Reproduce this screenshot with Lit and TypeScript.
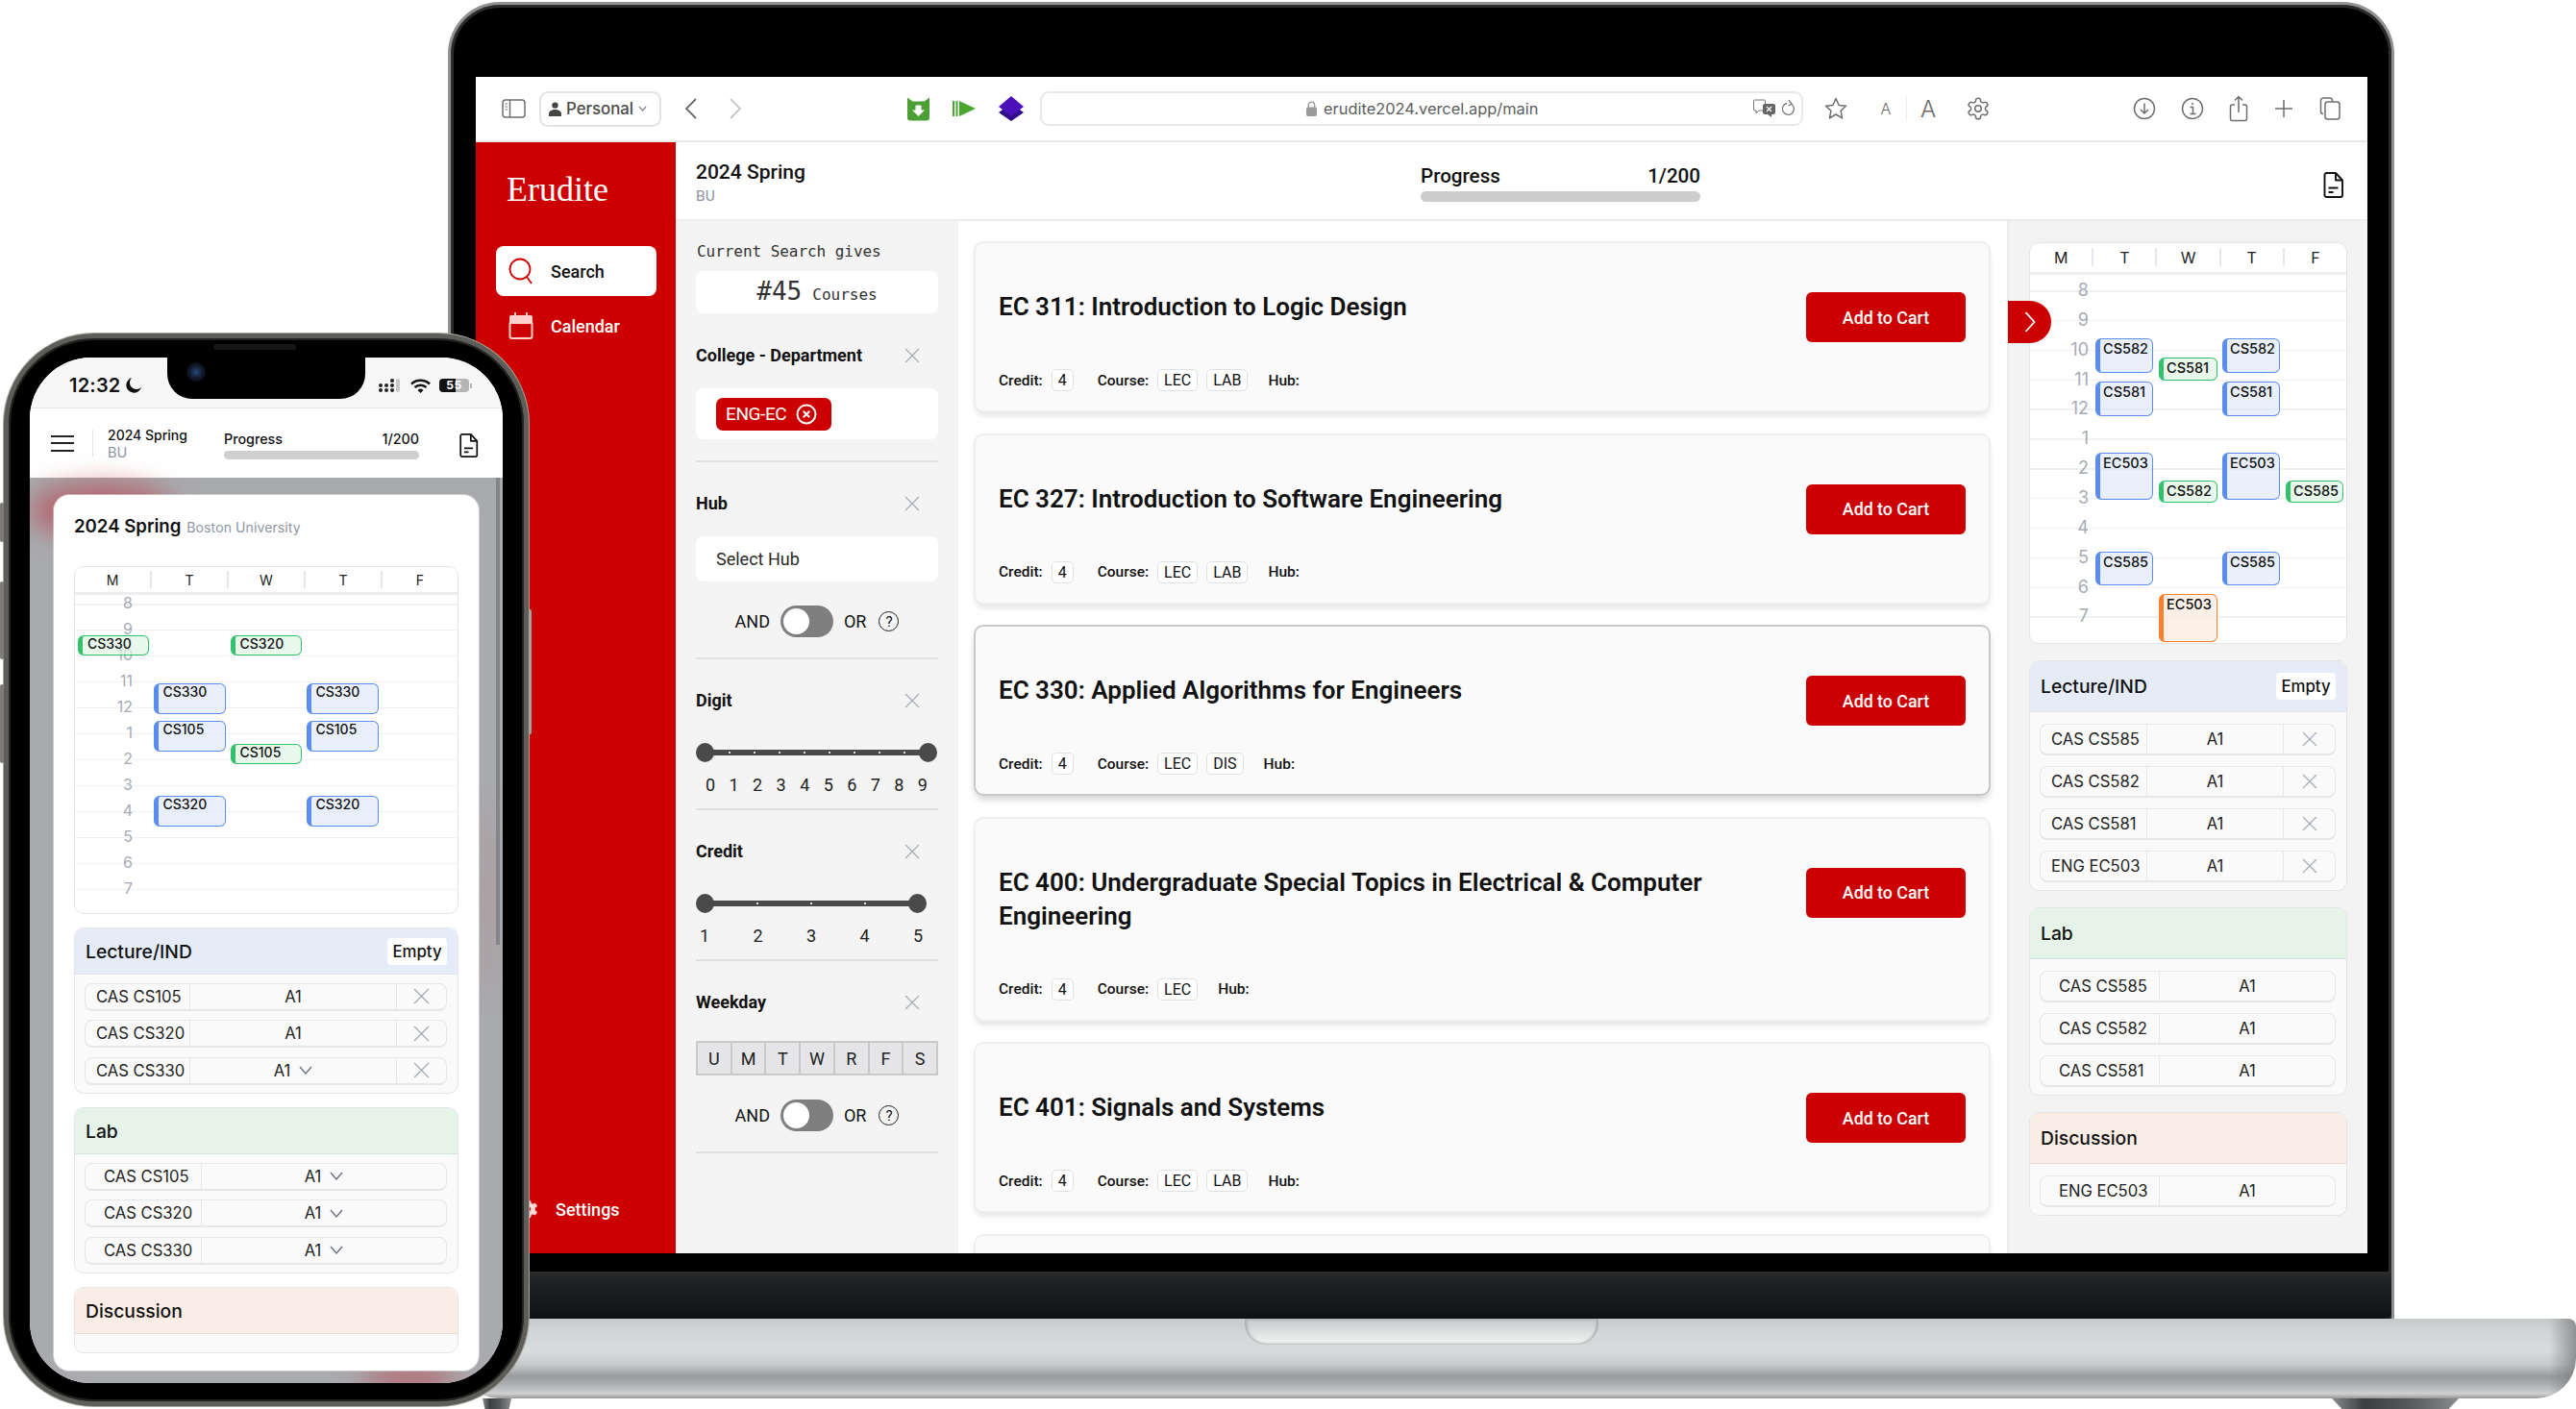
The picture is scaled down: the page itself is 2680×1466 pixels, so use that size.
import { LitElement, html, css, nothing } from "lit";
import { customElement } from "lit/decorators.js";

type Ev = { t: string; k: "b" | "g" | "o"; x: number; y: number; w: number; h: number };
type CalCfg = { cls: string; first: number; pitch: number; right: number; labelH: number; lines: number; events: Ev[] };

const HOURS = ["8", "9", "10", "11", "12", "1", "2", "3", "4", "5", "6", "7"];
const DAYS = ["M", "T", "W", "T", "F"];

const lapCal: CalCfg = {
  cls: "cal-lap", first: 16, pitch: 30.85, right: 61, labelH: 24, lines: 12,
  events: [
    { t: "CS582", k: "b", x: 68, y: 66, w: 60, h: 36 }, { t: "CS582", k: "b", x: 200, y: 66, w: 60, h: 36 },
    { t: "CS581", k: "g", x: 134, y: 86, w: 61, h: 24 },
    { t: "CS581", k: "b", x: 68, y: 111, w: 60, h: 36 }, { t: "CS581", k: "b", x: 200, y: 111, w: 60, h: 36 },
    { t: "EC503", k: "b", x: 68, y: 185, w: 60, h: 49 }, { t: "EC503", k: "b", x: 200, y: 185, w: 60, h: 49 },
    { t: "CS582", k: "g", x: 134, y: 214, w: 61, h: 23 }, { t: "CS585", k: "g", x: 266, y: 214, w: 60, h: 23 },
    { t: "CS585", k: "b", x: 68, y: 288, w: 60, h: 35 }, { t: "CS585", k: "b", x: 200, y: 288, w: 60, h: 35 },
    { t: "EC503", k: "o", x: 134, y: 332, w: 61, h: 50 },
  ],
};
const phoneCal: CalCfg = {
  cls: "cal-phone", first: 9, pitch: 26.97, right: 60, labelH: 22, lines: 12,
  events: [
    { t: "CS330", k: "g", x: 3, y: 42, w: 74, h: 21 }, { t: "CS320", k: "g", x: 161.5, y: 42, w: 74, h: 21 },
    { t: "CS330", k: "b", x: 81.5, y: 91.6, w: 75, h: 32 }, { t: "CS330", k: "b", x: 240.5, y: 91.6, w: 75, h: 32 },
    { t: "CS105", k: "b", x: 81.5, y: 131, w: 75, h: 32 }, { t: "CS105", k: "b", x: 240.5, y: 131, w: 75, h: 32 },
    { t: "CS105", k: "g", x: 161.5, y: 154.6, w: 74, h: 21 },
    { t: "CS320", k: "b", x: 81.5, y: 209, w: 75, h: 32 }, { t: "CS320", k: "b", x: 240.5, y: 209, w: 75, h: 32 },
  ],
};

const xIcon = (cls = "x-ico") => html`<svg class=${cls} viewBox="0 0 16 16" fill="none" stroke="#a5abb6" stroke-width="1.2"><path d="M1 1l14 14M15 1L1 15"/></svg>`;
const chev = html`<svg class="chev" viewBox="0 0 14 9" fill="none" stroke="#6b7280" stroke-width="1.4"><path d="M1 1l6 7 6-7"/></svg>`;
const docIcon = (cls: string) => html`<svg class=${cls} viewBox="0 0 21 27" fill="none" stroke="#111" stroke-width="1.9" stroke-linejoin="round"><path d="M3.5 1h9.5l7 7.5V24a2 2 0 0 1-2 2H3.5a2 2 0 0 1-2-2V3a2 2 0 0 1 2-2z"/><path d="M13 1v7.5h7M5.5 16.5h10M5.5 21h5"/></svg>`;
const gearPath = "M12.22 2h-.44a2 2 0 0 0-2 2v.18a2 2 0 0 1-1 1.73l-.43.25a2 2 0 0 1-2 0l-.15-.08a2 2 0 0 0-2.73.73l-.22.38a2 2 0 0 0 .73 2.73l.15.1a2 2 0 0 1 1 1.72v.51a2 2 0 0 1-1 1.74l-.15.09a2 2 0 0 0-.73 2.73l.22.38a2 2 0 0 0 2.73.73l.15-.08a2 2 0 0 1 2 0l.43.25a2 2 0 0 1 1 1.73V20a2 2 0 0 0 2 2h.44a2 2 0 0 0 2-2v-.18a2 2 0 0 1 1-1.73l.43-.25a2 2 0 0 1 2 0l.15.08a2 2 0 0 0 2.73-.73l.22-.39a2 2 0 0 0-.73-2.73l-.15-.08a2 2 0 0 1-1-1.74v-.5a2 2 0 0 1 1-1.74l.15-.09a2 2 0 0 0 .73-2.73l-.22-.38a2 2 0 0 0-2.73-.73l-.15.08a2 2 0 0 1-2 0l-.43-.25a2 2 0 0 1-1-1.73V4a2 2 0 0 0-2-2z";

@customElement("app-root")
export class AppRoot extends LitElement {
  static styles = css`
    :host { display: block; position: relative; width: 2680px; height: 1466px; overflow: hidden; background: #fff; font-family: Roboto, "Liberation Sans", sans-serif; color: #111; }
    * { box-sizing: border-box; }
    svg { display: block; flex: none; }

    /* laptop */
    .base { position: absolute; left: 478px; top: 1372px; width: 2202px; height: 83px; border-radius: 0 8px 42px 42px;
      background: linear-gradient(to left, rgba(120,122,124,.75), rgba(120,122,124,0) 28px), linear-gradient(180deg, #c6c9ca 0, #d2d5d6 14px, #d9dcdc 34px, #c6c9ca 48px, #989a9b 60px, #abadae 68px, #cfd0d1 78px, #979797 83px); }
    .notch { position: absolute; left: 817px; top: 0; width: 368px; height: 27px; border-radius: 0 0 22px 22px;
      background: linear-gradient(180deg, #c3c6c7, #eef0f0 85%); box-shadow: inset 2px 0 3px #a8aaab, inset -2px 0 3px #a8aaab; }
    .foot { position: absolute; top: 1455px; height: 11px; background: linear-gradient(90deg, #8a8c8d, #3d3e40 25%, #55575a 60%, #8a8c8d); }
    .foot-r { left: 2426px; width: 132px; clip-path: polygon(0 0, 100% 0, 92% 100%, 8% 100%); }
    .foot-l { left: 502px; width: 30px; clip-path: polygon(0 0, 100% 0, 92% 100%, 8% 100%); }
    .laptop { position: absolute; left: 466px; top: 2px; width: 2025px; height: 1370px; background: #000; border-radius: 54px 54px 0 0; border: 3px solid #8f9193; border-bottom: 0; box-shadow: inset 0 0 0 3px #2c2c2c; padding: 75px 25px 0 26px; display: flex; flex-direction: column; }
    .screen { width: 1968px; height: 1224px; flex: none; background: #fff; display: flex; flex-direction: column; overflow: hidden; }
    .hinge { flex: 1; margin: 19px -25px 0 -26px; background: linear-gradient(180deg, #27282a, #1e1f21 30%, #101113); border-top: 2px solid #2d2e30; border-radius: 0 0 6px 6px; }

    /* browser toolbar */
    .toolbar { height: 68px; flex: none; display: flex; align-items: center; padding-left: 27px; border-bottom: 2px solid #e8e8e8; }
    .ml14 { margin-left: 14px; } .ml17 { margin-left: 17px; } .ml22 { margin-left: 22px; } .ml24 { margin-left: 24px; }
    .ml28 { margin-left: 28px; } .ml26 { margin-left: 26px; } .ml31 { margin-left: 31px; } .ml32 { margin-left: 32px; } .ml34 { margin-left: 34px; }
    .ml148 { margin-left: 148px; } .ml172 { margin-left: 172px; }
    .personal { width: 127px; height: 37px; border: 2px solid #e3e3e3; border-radius: 9px; display: flex; align-items: center; gap: 5px; padding-left: 8px; font: 500 16.8px Inter, sans-serif; color: #4b4b4b; }
    .address { width: 794px; height: 36px; border: 2px solid #e8e8e8; border-radius: 9px; display: flex; align-items: center; position: relative; padding-left: 275px; gap: 7px; font: 400 16.4px Inter, sans-serif; color: #5d5d5d; }
    .address-tools { margin-left: auto; display: flex; align-items: center; gap: 6px; padding-right: 6px; }
    .tb-a { font: 300 16px Inter, sans-serif; color: #6a6a6a; width: 12px; text-align: center; }
    .tb-A { font: 300 24px Inter, sans-serif; color: #6a6a6a; width: 16px; display: flex; justify-content: center; position: relative; }
    .tb-sep { width: 1px; height: 26px; background: #eee; margin: 0 14px 0 15px; }

    /* app */
    .app { flex: 1; display: flex; min-height: 0; }
    .side { width: 208px; flex: none; background: #cc0000; display: flex; flex-direction: column; padding: 29px 0 33px 21px; }
    .brand { font: 400 36px/40px "Liberation Serif", serif; color: #fff; padding-left: 11px; }
    .nav { width: 167px; height: 52px; display: flex; align-items: center; gap: 18px; padding-left: 13px; border-radius: 8px; font: 500 18px Roboto, sans-serif; color: #fff; }
    .nav-on { background: #fff; color: #111; margin-top: 39px; margin-bottom: 5px; }
    .nav-set { margin-top: auto; padding-left: 23px; gap: 17px; height: 26px; }
    .main { flex: 1; display: flex; flex-direction: column; min-width: 0; }
    .head { height: 82px; flex: none; display: flex; align-items: center; padding: 0 25px 0 21px; background: #fff; border-bottom: 2px solid #ececec; }
    .term { width: 754px; flex: none; margin-top: 3px; }
    .term-t { font: 500 21px/26px Roboto, sans-serif; }
    .term-s { font: 400 15.5px/20px Roboto, sans-serif; color: #8b93a3; margin-top: 2px; }
    .prog { width: 291px; flex: none; padding-top: 4px; }
    .prog-row { display: flex; justify-content: space-between; font: 500 20.6px/24px Roboto, sans-serif; }
    .prog-bar { height: 11px; border-radius: 6px; background: #cdcdcd; margin-top: 4px; }
    .head-doc { margin: 9px 0 0 auto; width: 21px; height: 27px; }
    .content { flex: 1; display: flex; min-height: 0; }

    /* filters */
    .filters { width: 294px; flex: none; background: #f4f4f4; padding: 20px 21px 0 21px; }
    .mono-l { font: 400 16px/24px "DejaVu Sans Mono", monospace; color: #333; letter-spacing: -.05px; margin-left: 1px; }
    .count { height: 44px; margin-top: 8px; background: #fff; border-radius: 8px; display: flex; align-items: baseline; justify-content: center; padding-top: 3px; gap: 11px; font-family: "DejaVu Sans Mono", monospace; color: #333; }
    .count b { font-weight: 400; font-size: 26px; line-height: 36px; }
    .count span { font-size: 16px; }
    .f-head { display: flex; align-items: center; justify-content: space-between; height: 24px; margin-top: 31px; font: 700 18px/24px Roboto, sans-serif; padding-right: 19px; }
    .f-first { margin-top: 32px; }
    .x-ico { width: 16px; height: 16px; }
    .f-box { margin-top: 22px; background: #fff; border-radius: 8px; display: flex; align-items: center; padding-left: 21px; }
    .box-col { height: 53px; }
    .box-hub { height: 47px; font: 400 18px Roboto, sans-serif; color: #2a2a2a; }
    .tag { width: 120px; height: 34px; background: #cc0000; border-radius: 7px; color: #fff; font: 400 19px Roboto, sans-serif; display: flex; align-items: center; gap: 10px; padding-left: 10px; letter-spacing: -.4px; }
    .tag-x { width: 22px; height: 22px; }
    .div { height: 2px; background: #e0e0e0; }
    .div1 { margin-top: 22px; } .div2 { margin-top: 21px; } .div3 { margin-top: 12px; }
    .toggle-row { margin-top: 25px; height: 33px; display: flex; align-items: center; justify-content: center; font: 400 18px Roboto, sans-serif; gap: 11px; }
    .toggle { width: 55px; height: 33px; border-radius: 17px; background: #7f7f7f; padding: 3px; }
    .knob { width: 27px; height: 27px; border-radius: 50%; background: #fff; }
    .help { width: 21px; height: 21px; border: 1.6px solid #222; border-radius: 50%; display: flex; align-items: center; justify-content: center; font: 400 15px Roboto, sans-serif; margin-left: 2px; }
    .slider { margin-top: 32px; height: 20px; display: flex; align-items: center; position: relative; }
    .sl-digit { width: 251px; } .sl-credit { width: 240px; }
    .handle { width: 19px; height: 20px; border-radius: 50%; background: #4a4a4a; flex: none; position: relative; }
    .track { flex: 1; height: 6px; background: #4a4a4a; margin: 0 -9.5px; display: flex; align-items: center; justify-content: space-evenly; }
    .track i { width: 2px; height: 2px; background: #ddd; display: block; }
    .nums { margin-top: 12px; height: 24px; display: flex; justify-content: space-between; font: 400 18px/24px Roboto, sans-serif; color: #222; }
    .nums span { width: 20px; text-align: center; }
    .nums-digit { width: 241px; margin-left: 5px; }
    .nums-credit { width: 242px; margin-left: -1px; }
    .week { margin-top: 28px; display: grid; grid-template-columns: repeat(7, 1fr); height: 36px; background: #c9c9c9; padding: 2px; gap: 2px; }
    .week span { background: #e5e5e7; display: flex; align-items: center; justify-content: center; font: 400 18px Roboto, sans-serif; color: #222; }

    /* course list */
    .list { flex: 1; min-width: 0; background: #fff; padding: 21px 17px 0 16px; display: flex; flex-direction: column; gap: 21.5px; overflow: hidden; }
    .card { flex: none; background: #fafafa; border: 2px solid #eceef1; border-radius: 10px; box-shadow: 0 5px 7px -2px rgba(0,0,0,.12); padding: 49px 24px 20px 24px; }
    .card-on { border-color: #c8c8c8; box-shadow: 0 5px 8px -2px rgba(0,0,0,.2); }
    .card-stub { height: 178px; }
    .card-row { display: flex; align-items: flex-start; justify-content: space-between; gap: 40px; }
    .title { font: 600 26px/35px Roboto, sans-serif; margin: 0 0 47px 0; color: #111; }
    .buy { flex: none; width: 166px; height: 52px; margin-top: 2px; background: #cc0000; color: #fff; border-radius: 6px; display: flex; align-items: center; justify-content: center; font: 500 17.8px Roboto, sans-serif; }
    .meta { display: flex; align-items: center; font: 500 15.5px Roboto, sans-serif; height: 23px; }
    .chip { border: 1.5px solid #dfe1e5; border-radius: 5px; height: 23px; display: flex; align-items: center; padding: 0 6px; margin-left: 9px; font-weight: 400; font-size: 16px; background: #fff; }
    .m-gap { margin-left: 25px; }
    .m-hub { margin-left: 21px; }

    /* right panel */
    .right { width: 375px; flex: none; background: #f3f3f3; border-left: 2px solid #ececec; padding: 22px 21px 0 21px; position: relative; }
    .fold { position: absolute; left: -1px; top: 83px; width: 45px; height: 44px; background: #cc0000; border-radius: 0 22px 22px 0; display: flex; align-items: center; justify-content: center; z-index: 2; }
    .cal { background: #fff; border: 1.5px solid #e3e5e9; border-radius: 10px; overflow: hidden; font-family: Inter, sans-serif; }
    .cal-lap { height: 418px; }
    .cal-phone { height: 362px; }
    .cal-head { display: flex; border-bottom: 3px solid #eceef1; }
    .cal-lap .cal-head { height: 33px; padding: 5px 0 6px; }
    .cal-phone .cal-head { height: 29px; padding: 4px 0 4px; }
    .cal-day { flex: 1; display: flex; align-items: center; justify-content: center; font-size: 16px; color: #222; }
    .cal-phone .cal-day { font-size: 14px; }
    .cal-day + .cal-day { border-left: 2px solid #e4e7ec; }
    .cal-body { position: relative; height: 100%; }
    .line { position: absolute; left: 0; right: 0; height: 1.5px; background: #f0f1f3; }
    .hr { position: absolute; width: 40px; text-align: right; color: #a6abb5; font-size: 18px; }
    .cal-phone .hr { font-size: 16px; margin-top: -1px; }
    .ev { position: absolute; border-radius: 6px; border: 1.5px solid; border-left-width: 5px; font-weight: 500; font-size: 14.5px; line-height: 20px; padding-left: 3px; color: #111; white-space: nowrap; overflow: hidden; }
    .cal-phone .ev { font-size: 14px; line-height: 15.5px; padding-left: 5px; }
    .ev-b { border-color: #5b8def; background: rgba(219,230,250,.6); }
    .ev-g { border-color: #33c26b; background: rgba(222,245,230,.7); }
    .ev-o { border-color: #f9802e; background: rgba(253,236,225,.8); }

    .sec { margin-top: 17px; background: #fafafa; border: 1.5px solid #e3e5e9; border-radius: 10px; overflow: hidden; font-family: Inter, sans-serif; }
    .sec-h { height: 53px; display: flex; align-items: center; justify-content: space-between; padding: 0 11px; font-size: 19.3px; font-weight: 500; border-bottom: 1.5px solid #dfe3ea; }
    .h-b { background: #e5ecf7; } .h-g { background: #e5f3e9; border-color: #d5e4da; } .h-o { background: #faede5; border-color: #e8dcd4; }
    .empty { background: #fff; border-radius: 4px; height: 28px; width: 62px; font-size: 16.8px; font-weight: 500; display: flex; align-items: center; justify-content: center; }
    .rows { padding: 12px 11px 8px 10px; display: flex; flex-direction: column; gap: 11px; }
    .row { height: 33px; border: 1.5px solid #e5e7eb; border-bottom-width: 2px; border-radius: 8px; display: grid; align-items: center; font-size: 16.6px; color: #222; }
    .r-lec { grid-template-columns: 110px 1fr 54px; }
    .r-lab { grid-template-columns: 123px 1fr; }
    .cell { height: 100%; display: flex; align-items: center; justify-content: center; gap: 9px; }
    .cell + .cell { border-left: 1.5px solid #e5e7eb; }
    .name { justify-content: flex-start; padding-left: 11px; white-space: nowrap; }
    .r-lab .name { padding-left: 19px; }
    .chev { width: 14px; height: 9px; }

    /* phone */
    .phone { position: absolute; left: 4px; top: 347px; width: 546px; height: 1116px; background: #000; border-radius: 94px; border: 5px solid #5e5d59; box-shadow: 0 0 0 1px #a5a49e, inset 0 0 0 2px #23231f; padding: 20px 22px; z-index: 5; }
    .btn { position: absolute; background: #7d7c76; border-radius: 2px; }
    .b1 { left: -9px; top: 171px; width: 4px; height: 41px; }
    .b2 { left: -9px; top: 253px; width: 4px; height: 81px; }
    .b3 { left: -9px; top: 360px; width: 4px; height: 82px; }
    .b4 { right: -8px; top: 282px; width: 3px; height: 130px; background: #a3a3a0; }
    .speaker { position: absolute; left: 213px; top: 6px; width: 86px; height: 6px; border-radius: 3px; background: #161616; }
    .p-screen { width: 492px; height: 1067px; border-radius: 64px; overflow: hidden; background: #fff; position: relative; display: flex; flex-direction: column; font-family: Inter, sans-serif; }
    .p-notch { position: absolute; left: 143px; top: 0; width: 206px; height: 43px; background: #000; border-radius: 0 0 26px 26px; z-index: 3; }
    .cam { position: absolute; left: 20px; top: 5px; width: 20px; height: 20px; border-radius: 50%; background: radial-gradient(circle, #234a83 0, #141b2c 45%, #0a0d14 75%); }
    .status { height: 53px; flex: none; background: #f6f6f6; border-bottom: 1px solid #e6e6e6; display: flex; align-items: center; padding: 6px 32px 0 41px; }
    .clock { font: 600 20px Inter, sans-serif; letter-spacing: .2px; margin-right: 5px; }
    .status-r { margin-left: auto; display: flex; align-items: center; gap: 9px; }
    .batt { display: flex; align-items: center; gap: 1px; }
    .batt-b { width: 31px; height: 14px; border-radius: 4px; background: linear-gradient(90deg, #111 55%, #b5b5b5 55%); color: #fff; font: 700 12px/14px Inter, sans-serif; text-align: center; letter-spacing: .5px; }
    .batt-n { width: 2px; height: 5px; background: #b5b5b5; border-radius: 0 1px 1px 0; }
    .p-head { height: 72px; flex: none; background: #fff; display: flex; align-items: center; padding: 0 25px 0 22px; }
    .burger { width: 24px; height: 17px; border-top: 2px solid #222; border-bottom: 2px solid #222; position: relative; flex: none; margin-right: 19px; display: flex; align-items: center; }
    .burger i { display: block; width: 100%; height: 2px; background: #222; }
    .p-sep { width: 1px; height: 28px; background: #e4e4e4; margin-right: 15px; flex: none; }
    .p-term { width: 121px; flex: none; margin-top: 1px; }
    .p-t { font: 500 14px/18px Inter, sans-serif; }
    .p-s { font: 400 14.5px/18px Inter, sans-serif; color: #8e96a5; }
    .p-prog { width: 203px; flex: none; margin-top: 3px; }
    .p-row { display: flex; justify-content: space-between; font: 500 14.3px/18px Inter, sans-serif; }
    .p-bar { height: 9px; border-radius: 5px; background: #d0d0d0; margin-top: 3px; }
    .p-doc { margin: 4px 0 0 auto; width: 21px; height: 25px; }
    .p-body { flex: 1; min-height: 0; background: #a9aaae; padding: 18px 25px; position: relative; }
    .blob { position: absolute; border-radius: 50%; filter: blur(14px); background: rgba(190,30,40,.5); }
    .blob1 { left: 0px; top: 6px; width: 150px; height: 56px; }
    .blob2 { left: 345px; top: 925px; width: 100px; height: 26px; }
    .blob3 { left: 468px; top: 340px; width: 14px; height: 200px; background: rgba(190,90,90,.25); }
    .sb { position: absolute; right: 3px; top: 0; width: 4px; height: 486px; background: #84858a; }
    .sheet { width: 442px; height: 911px; background: #fff; border-radius: 16px; padding: 19px 21px 0 21px; overflow: hidden; position: relative; box-shadow: 0 0 0 1px rgba(255,255,255,.4); }
    .sheet-h { display: flex; align-items: baseline; gap: 6px; height: 26px; font: 600 18.6px/26px Inter, sans-serif; margin-top: 0; }
    .sheet-h span { font: 400 14px Inter, sans-serif; color: #8e96a5; letter-spacing: .1px; }
    .p-cal { margin-top: 29px; }
    .p-stack .sec { margin-top: 14px; }
    .p-stack .sec-h { height: 48px; padding: 0 11px; }
    .p-stack .rows { padding: 8.5px 11px 8.5px 10px; gap: 9.6px; }
    .p-stack .row { height: 29px; font-size: 16.6px; }
    .p-stack .r-lec { grid-template-columns: 108px 1fr 52px; }
    .p-stack .r-lab { grid-template-columns: 120px 1fr; }
    .p-stack .x-ico { width: 17px; height: 17px; }
    .stub { height: 19px; }
  `;

  renderCal(c: CalCfg) {
    return html`<div class="cal ${c.cls}">
      <div class="cal-head">${DAYS.map((d) => html`<span class="cal-day">${d}</span>`)}</div>
      <div class="cal-body">
        ${HOURS.map((h, i) => {
          const y = c.first + i * c.pitch;
          return html`<div class="line" style="top:${y}px"></div>
            <div class="hr" style="top:${y - c.labelH / 2}px;left:${c.right - 40}px;line-height:${c.labelH}px">${h}</div>`;
        })}
        ${c.events.map((e) => html`<div class="ev ev-${e.k}" style="left:${e.x}px;top:${e.y}px;width:${e.w}px;height:${e.h}px">${e.t}</div>`)}
      </div>
    </div>`;
  }

  renderSec(title: string, tone: string, kind: "lec" | "lab", rows: [string, boolean][], empty = false, stub = false) {
    return html`<div class="sec">
      <div class="sec-h h-${tone}"><span>${title}</span>${empty ? html`<span class="empty">Empty</span>` : nothing}</div>
      ${stub ? html`<div class="stub"></div>` : html`<div class="rows">
        ${rows.map(([n, c]) => html`<div class="row r-${kind}">
          <div class="cell name">${n}</div>
          <div class="cell">A1${c ? chev : nothing}</div>
          ${kind === "lec" ? html`<div class="cell">${xIcon()}</div>` : nothing}
        </div>`)}
      </div>`}
    </div>`;
  }

  renderCard(title: string, second: string, on = false) {
    return html`<div class="card ${on ? "card-on" : ""}">
      <div class="card-row"><h2 class="title">${title}</h2><div class="buy">Add to Cart</div></div>
      <div class="meta">
        <span>Credit:</span><span class="chip">4</span>
        <span class="m-gap">Course:</span><span class="chip">LEC</span>${second ? html`<span class="chip">${second}</span>` : nothing}
        <span class="m-hub">Hub:</span>
      </div>
    </div>`;
  }

  renderToolbar() {
    const g = "#6e6e6e";
    return html`<div class="toolbar">
      <svg width="25" height="20" viewBox="0 0 25 20" fill="none" stroke=${g} stroke-width="1.5"><rect x="1" y="1" width="23" height="18" rx="3"/><path d="M8.5 1v18"/><path d="M3.5 5h2.5M3.5 8h2.5M3.5 11h2.5" stroke-width="1.2"/></svg>
      <div class="personal ml14">
        <svg width="13" height="15" viewBox="0 0 13 15" fill="#444"><circle cx="6.5" cy="3.6" r="3.2"/><path d="M0 15v-2.5C0 9.7 3 8 6.5 8S13 9.7 13 12.5V15z"/></svg>
        <span>Personal</span>
        <svg width="9" height="6" viewBox="0 0 9 6" fill="none" stroke="#888" stroke-width="1.3"><path d="M1 1l3.5 4L8 1"/></svg>
      </div>
      <svg class="ml24" width="14" height="24" viewBox="0 0 14 24" fill="none" stroke="#6a6a6a" stroke-width="1.8"><path d="M12 2L2 12l10 10"/></svg>
      <svg class="ml32" width="14" height="24" viewBox="0 0 14 24" fill="none" stroke="#c4c4c4" stroke-width="1.8"><path d="M2 2l10 10L2 22"/></svg>
      <svg class="ml172" width="23" height="25" viewBox="0 0 23 25"><path d="M0 0.5l5.5 4h12l5.5-4v21a3 3 0 0 1-3 3H3a3 3 0 0 1-3-3z" fill="#4c9f33"/><path d="M8.5 8.5h6v5h3.5l-6.5 6.5-6.5-6.5h3.5z" fill="#fff"/></svg>
      <svg class="ml24" width="24" height="18" viewBox="0 0 24 18" fill="#4ba62f"><rect x="0" y="1" width="2" height="16"/><rect x="3.5" y="1" width="2" height="16"/><path d="M7 1l17 8L7 17z"/></svg>
      <svg class="ml24" width="26" height="26" viewBox="0 0 26 26"><path d="M13 8l13 9-13 9L0 17z" fill="#2f0b8c"/><path d="M13 0l13 11-13 10L0 11z" fill="#4a12b8"/></svg>
      <div class="address ml17">
        <svg width="11" height="16" viewBox="0 0 11 16" fill="#9a9a9a"><rect x="0" y="6.5" width="11" height="9.5" rx="2"/><path d="M2.3 7V4.3a3.2 3.2 0 0 1 6.4 0V7" fill="none" stroke="#9a9a9a" stroke-width="1.4"/></svg>
        <span>erudite2024.vercel.app/main</span>
        <div class="address-tools">
          <svg width="24" height="20" viewBox="0 0 24 20"><path d="M1.5 1h10a1 1 0 0 1 1 1v9a1 1 0 0 1-1 1H6l-3 3v-3H1.5a1 1 0 0 1-1-1V2a1 1 0 0 1 1-1z" fill="#fff" stroke="#777"/><rect x="10" y="5" width="13" height="11" rx="2" fill="#666"/><path d="M15 16h4v3z" fill="#666"/><path d="M14 8l5 5M19 8l-5 5" stroke="#fff" stroke-width="1.2"/></svg>
          <svg width="14" height="20" viewBox="0 0 14 20" fill="none" stroke="#7a7a7a" stroke-width="1.3"><path d="M10 5.5a6 6 0 1 1-5-1"/><path d="M7 1l3 4-3.5 2"/></svg>
        </div>
      </div>
      <svg class="ml22" width="24" height="24" viewBox="0 0 24 24" fill="none" stroke=${g} stroke-width="1.5" stroke-linejoin="round"><path d="M12 1.5l3.2 7 7.3.8-5.4 5 1.5 7.6L12 18l-6.6 3.9 1.5-7.6-5.4-5 7.3-.8z"/></svg>
      <span class="tb-a ml34">A</span>
      <span class="tb-sep"></span>
      <span class="tb-A">A</span>
      <svg class="ml31" width="26" height="26" viewBox="0 0 24 24" fill="none" stroke=${g} stroke-width="1.4"><path d=${gearPath}/><circle cx="12" cy="12" r="3"/></svg>
      <svg class="ml148" width="24" height="24" viewBox="0 0 24 24" fill="none" stroke=${g} stroke-width="1.5"><circle cx="12" cy="12" r="10.5"/><path d="M12 6.5v10.5M8 13l4 4 4-4"/></svg>
      <svg class="ml26" width="24" height="24" viewBox="0 0 24 24" fill="none" stroke=${g} stroke-width="1.5"><circle cx="12" cy="12" r="10.5"/><path d="M9.5 10.5H12.5V17M9.5 17.5h6"/><circle cx="12" cy="7" r="1" fill=${g} stroke="none"/></svg>
      <svg class="ml26" width="20" height="28" viewBox="0 0 20 28" fill="none" stroke=${g} stroke-width="1.5"><path d="M6 10H3.5a2 2 0 0 0-2 2v12.5a2 2 0 0 0 2 2h13a2 2 0 0 0 2-2V12a2 2 0 0 0-2-2H14M10 18V2M6 5.5L10 1.5l4 4"/></svg>
      <svg class="ml28" width="18" height="18" viewBox="0 0 18 18" fill="none" stroke=${g} stroke-width="1.5"><path d="M9 0v18M0 9h18"/></svg>
      <svg class="ml28" width="22" height="24" viewBox="0 0 22 24" fill="none" stroke=${g} stroke-width="1.5"><path d="M4 17.5A2.5 2.5 0 0 1 1.5 15V3.5A2.5 2.5 0 0 1 4 1h7a2.5 2.5 0 0 1 2.5 2.5v1"/><rect x="6" y="5" width="15" height="18" rx="2.5"/></svg>
    </div>`;
  }

  renderFilters() {
    const toggle = html`<div class="toggle-row"><span>AND</span><div class="toggle"><div class="knob"></div></div><span>OR</span><span class="help">?</span></div>`;
    return html`<div class="filters">
      <div class="mono-l">Current Search gives</div>
      <div class="count"><b>#45</b><span>Courses</span></div>
      <div class="f-head f-first"><span>College - Department</span>${xIcon()}</div>
      <div class="f-box box-col"><div class="tag"><span>ENG-EC</span>
        <svg class="tag-x" viewBox="0 0 20 20" fill="none" stroke="#fff" stroke-width="1.8"><circle cx="10" cy="10" r="8.6"/><path d="M7 7l6 6M13 7l-6 6"/></svg></div></div>
      <div class="div div1"></div>
      <div class="f-head"><span>Hub</span>${xIcon()}</div>
      <div class="f-box box-hub">Select Hub</div>
      ${toggle}
      <div class="div div2"></div>
      <div class="f-head"><span>Digit</span>${xIcon()}</div>
      <div class="slider sl-digit"><span class="handle"></span><div class="track">${Array.from({ length: 8 }, () => html`<i></i>`)}</div><span class="handle"></span></div>
      <div class="nums nums-digit">${[0, 1, 2, 3, 4, 5, 6, 7, 8, 9].map((n) => html`<span>${n}</span>`)}</div>
      <div class="div div3"></div>
      <div class="f-head"><span>Credit</span>${xIcon()}</div>
      <div class="slider sl-credit"><span class="handle"></span><div class="track">${Array.from({ length: 3 }, () => html`<i></i>`)}</div><span class="handle"></span></div>
      <div class="nums nums-credit">${[1, 2, 3, 4, 5].map((n) => html`<span>${n}</span>`)}</div>
      <div class="div div3"></div>
      <div class="f-head"><span>Weekday</span>${xIcon()}</div>
      <div class="week">${["U", "M", "T", "W", "R", "F", "S"].map((d) => html`<span>${d}</span>`)}</div>
      ${toggle}
      <div class="div div2"></div>
    </div>`;
  }

  renderLaptop() {
    return html`<div class="base"><div class="notch"></div></div>
      <div class="foot foot-l"></div><div class="foot foot-r"></div>
      <div class="laptop">
        <div class="screen">
          ${this.renderToolbar()}
          <div class="app">
            <aside class="side">
              <div class="brand">Erudite</div>
              <div class="nav nav-on">
                <svg width="26" height="28" viewBox="0 0 26 28" fill="none" stroke="#cc0000" stroke-width="1.8"><circle cx="12" cy="12" r="10.5"/><path d="M19 20l5 7"/></svg>
                <span>Search</span>
              </div>
              <div class="nav">
                <svg width="26" height="28" viewBox="0 0 26 28"><path d="M3 3h20a2 2 0 0 1 2 2v7H1V5a2 2 0 0 1 2-2z" fill="#ffd2d2"/><path d="M7 0v4M19 0v4" stroke="#ffd2d2" stroke-width="2"/><rect x="1.5" y="10" width="23" height="17" rx="2" fill="none" stroke="#ffd2d2" stroke-width="2"/></svg>
                <span>Calendar</span>
              </div>
              <div class="nav nav-set">
                <svg width="22" height="22" viewBox="0 0 24 24" fill="#ffd9d9" stroke="#ffd9d9"><path d=${gearPath}/><circle cx="12" cy="12" r="3" fill="#cc0000"/></svg>
                <span>Settings</span>
              </div>
            </aside>
            <div class="main">
              <header class="head">
                <div class="term"><div class="term-t">2024 Spring</div><div class="term-s">BU</div></div>
                <div class="prog"><div class="prog-row"><span>Progress</span><span>1/200</span></div><div class="prog-bar"></div></div>
                ${docIcon("head-doc")}
              </header>
              <div class="content">
                ${this.renderFilters()}
                <div class="list">
                  ${this.renderCard("EC 311: Introduction to Logic Design", "LAB")}
                  ${this.renderCard("EC 327: Introduction to Software Engineering", "LAB")}
                  ${this.renderCard("EC 330: Applied Algorithms for Engineers", "DIS", true)}
                  ${this.renderCard("EC 400: Undergraduate Special Topics in Electrical & Computer Engineering", "")}
                  ${this.renderCard("EC 401: Signals and Systems", "LAB")}
                  <div class="card card-stub"></div>
                </div>
                <div class="right">
                  <div class="fold"><svg width="12" height="22" viewBox="0 0 12 22" fill="none" stroke="#fff" stroke-width="1.8"><path d="M1.5 1l9 10-9 10"/></svg></div>
                  ${this.renderCal(lapCal)}
                  ${this.renderSec("Lecture/IND", "b", "lec", [["CAS CS585", false], ["CAS CS582", false], ["CAS CS581", false], ["ENG EC503", false]], true)}
                  ${this.renderSec("Lab", "g", "lab", [["CAS CS585", false], ["CAS CS582", false], ["CAS CS581", false]])}
                  ${this.renderSec("Discussion", "o", "lab", [["ENG EC503", false]])}
                </div>
              </div>
            </div>
          </div>
        </div>
        <div class="hinge"></div>
      </div>`;
  }

  renderPhone() {
    return html`<div class="phone">
      <span class="btn b1"></span><span class="btn b2"></span><span class="btn b3"></span><span class="btn b4"></span>
      <span class="speaker"></span>
      <div class="p-screen">
        <div class="p-notch"><div class="cam"></div></div>
        <div class="status">
          <span class="clock">12:32</span>
          <svg width="18" height="18" viewBox="0 0 18 18" fill="#111"><path d="M7 1a8 8 0 1 0 10 10A7 7 0 0 1 7 1z"/></svg>
          <div class="status-r">
            <svg width="24" height="14" viewBox="0 0 24 14" fill="#222">
              <circle cx="2" cy="7" r="2"/><circle cx="2" cy="12" r="2"/><circle cx="8" cy="7" r="2"/><circle cx="8" cy="12" r="2"/>
              <circle cx="14" cy="2" r="2"/><circle cx="14" cy="7" r="2"/><circle cx="14" cy="12" r="2"/>
              <rect x="18" y="0" width="4" height="14" rx="2" fill="#c9c9c9"/>
            </svg>
            <svg width="21" height="15" viewBox="0 0 21 15" fill="none" stroke="#111" stroke-width="2.4"><path d="M1 5.5a14 14 0 0 1 19 0M4.5 9a9 9 0 0 1 12 0"/><path d="M10.5 15l-3-3a4.4 4.4 0 0 1 6 0z" fill="#111" stroke="none"/></svg>
            <div class="batt"><div class="batt-b">55</div><span class="batt-n"></span></div>
          </div>
        </div>
        <div class="p-head">
          <div class="burger"><i></i></div>
          <span class="p-sep"></span>
          <div class="p-term"><div class="p-t">2024 Spring</div><div class="p-s">BU</div></div>
          <div class="p-prog"><div class="p-row"><span>Progress</span><span>1/200</span></div><div class="p-bar"></div></div>
          ${docIcon("p-doc")}
        </div>
        <div class="p-body">
          <span class="blob blob1"></span><span class="blob blob2"></span><span class="blob blob3"></span>
          <span class="sb"></span>
          <div class="sheet">
            <div class="sheet-h">2024 Spring <span>Boston University</span></div>
            <div class="p-cal">${this.renderCal(phoneCal)}</div>
            <div class="p-stack">
              ${this.renderSec("Lecture/IND", "b", "lec", [["CAS CS105", false], ["CAS CS320", false], ["CAS CS330", true]], true)}
              ${this.renderSec("Lab", "g", "lab", [["CAS CS105", true], ["CAS CS320", true], ["CAS CS330", true]])}
              ${this.renderSec("Discussion", "o", "lab", [], false, true)}
            </div>
          </div>
        </div>
      </div>
    </div>`;
  }

  render() {
    return html`${this.renderLaptop()}${this.renderPhone()}`;
  }
}
